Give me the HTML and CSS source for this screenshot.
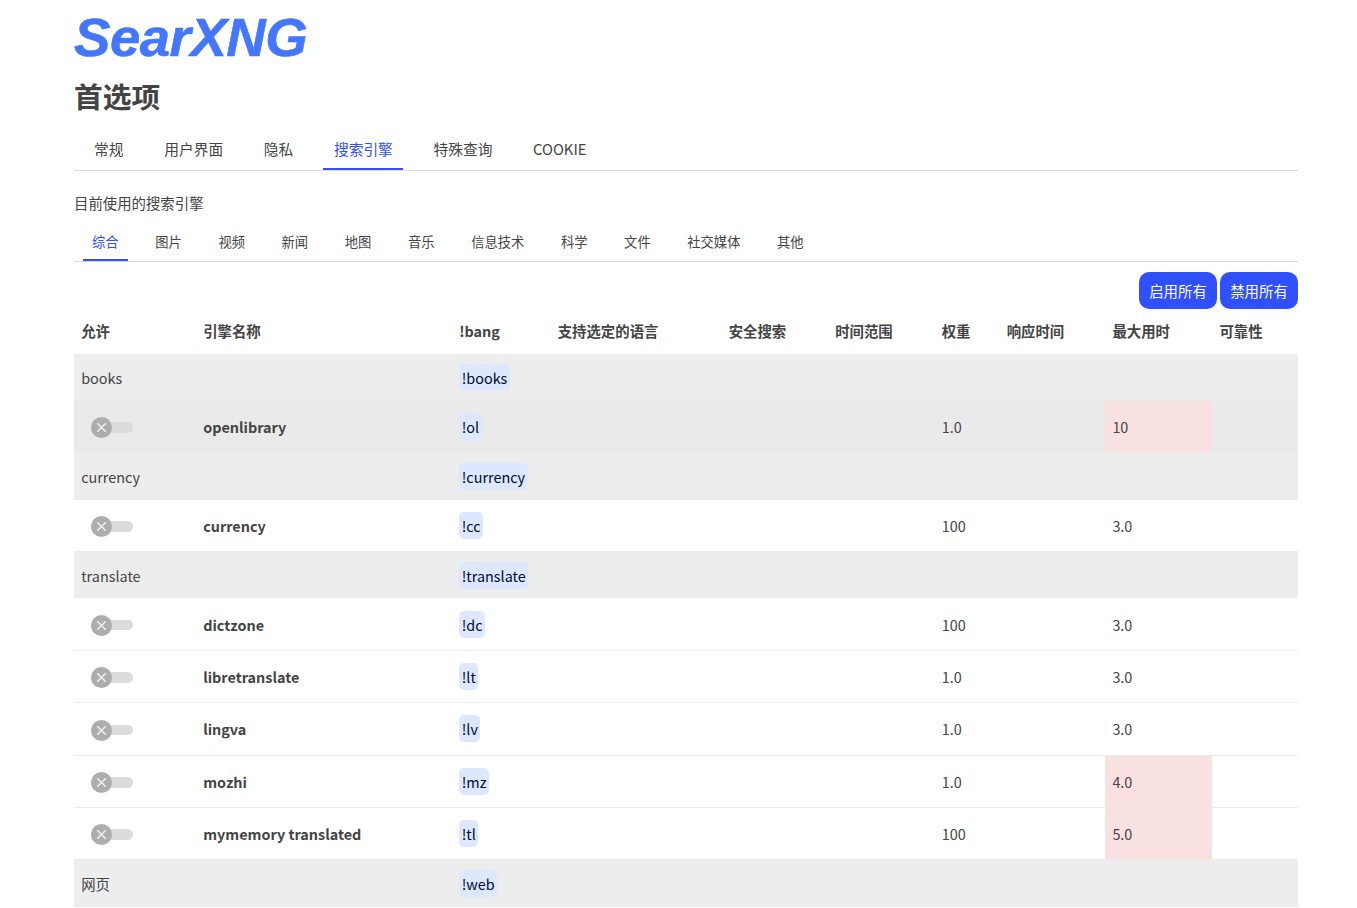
FILE: index.html
```html
<!DOCTYPE html>
<html lang="zh">
<head>
<meta charset="utf-8">
<title>SearXNG</title>
<link rel="stylesheet" href="styles.css">
</head>
<body>
<main class="page">
  <a class="logo">SearXNG</a>
  <h1 class="title">首选项</h1>
  <nav class="tabs main-tabs">
    <a>常规</a><a>用户界面</a><a>隐私</a><a class="active">搜索引擎</a><a>特殊查询</a><a>COOKIE</a>
  </nav>
  <p class="lead">目前使用的搜索引擎</p>
  <nav class="tabs sub-tabs">
    <a class="active">综合</a><a>图片</a><a>视频</a><a>新闻</a><a>地图</a><a>音乐</a><a>信息技术</a><a>科学</a><a>文件</a><a>社交媒体</a><a>其他</a>
  </nav>
  <div class="actions"><button>启用所有</button><button>禁用所有</button></div>
  <table class="engines">
    <colgroup>
      <col class="c1"><col class="c2"><col class="c3"><col class="c4"><col class="c5"><col class="c6"><col class="c7"><col class="c8"><col class="c9"><col class="c10">
    </colgroup>
    <thead>
      <tr><th>允许</th><th>引擎名称</th><th>!bang</th><th>支持选定的语言</th><th>安全搜索</th><th>时间范围</th><th>权重</th><th>响应时间</th><th>最大用时</th><th>可靠性</th></tr>
    </thead>
    <tbody>
      <tr class="group"><td colspan="2">books</td><td colspan="8"><span class="bang">!books</span></td></tr>
      <tr class="hover"><td><span class="toggle"><span class="knob"><svg viewBox="0 0 10 10"><path d="M0 0L10 10M10 0L0 10"/></svg></span></span></td><td class="name">openlibrary</td><td><span class="bang">!ol</span></td><td></td><td></td><td></td><td>1.0</td><td></td><td class="warn">10</td><td></td></tr>
      <tr class="group"><td colspan="2">currency</td><td colspan="8"><span class="bang">!currency</span></td></tr>
      <tr><td><span class="toggle"><span class="knob"><svg viewBox="0 0 10 10"><path d="M0 0L10 10M10 0L0 10"/></svg></span></span></td><td class="name">currency</td><td><span class="bang">!cc</span></td><td></td><td></td><td></td><td>100</td><td></td><td>3.0</td><td></td></tr>
      <tr class="group"><td colspan="2">translate</td><td colspan="8"><span class="bang">!translate</span></td></tr>
      <tr><td><span class="toggle"><span class="knob"><svg viewBox="0 0 10 10"><path d="M0 0L10 10M10 0L0 10"/></svg></span></span></td><td class="name">dictzone</td><td><span class="bang">!dc</span></td><td></td><td></td><td></td><td>100</td><td></td><td>3.0</td><td></td></tr>
      <tr><td><span class="toggle"><span class="knob"><svg viewBox="0 0 10 10"><path d="M0 0L10 10M10 0L0 10"/></svg></span></span></td><td class="name">libretranslate</td><td><span class="bang">!lt</span></td><td></td><td></td><td></td><td>1.0</td><td></td><td>3.0</td><td></td></tr>
      <tr><td><span class="toggle"><span class="knob"><svg viewBox="0 0 10 10"><path d="M0 0L10 10M10 0L0 10"/></svg></span></span></td><td class="name">lingva</td><td><span class="bang">!lv</span></td><td></td><td></td><td></td><td>1.0</td><td></td><td>3.0</td><td></td></tr>
      <tr><td><span class="toggle"><span class="knob"><svg viewBox="0 0 10 10"><path d="M0 0L10 10M10 0L0 10"/></svg></span></span></td><td class="name">mozhi</td><td><span class="bang">!mz</span></td><td></td><td></td><td></td><td>1.0</td><td></td><td class="warn">4.0</td><td></td></tr>
      <tr><td><span class="toggle"><span class="knob"><svg viewBox="0 0 10 10"><path d="M0 0L10 10M10 0L0 10"/></svg></span></span></td><td class="name">mymemory translated</td><td><span class="bang">!tl</span></td><td></td><td></td><td></td><td>100</td><td></td><td class="warn">5.0</td><td></td></tr>
      <tr class="group"><td colspan="2">网页</td><td colspan="8"><span class="bang">!web</span></td></tr>
    </tbody>
  </table>
</main>
</body>
</html>
```
FILE: styles.css
```css
html, body { margin: 0; padding: 0; background: #fff; }
body {
  font-family: "Noto Sans CJK SC", "Noto Sans", sans-serif;
  font-size: 14.4px;
  color: #444;
  height: 908px;
  overflow: hidden;
}
.page { width: 1224px; margin-left: 74px; }
.logo {
  display: block;
  height: 75px;
  line-height: 76px;
  font-family: "Liberation Sans", Arial, sans-serif;
  font-style: italic;
  font-weight: 700;
  font-size: 54.5px;
  letter-spacing: -0.45px;
  -webkit-text-stroke: 0.6px #4477ff;
  color: #4477ff;
}
.title { margin: 0; font-size: 28.8px; font-weight: 700; line-height: 42px; color: #444; }
.tabs { display: flex; border-bottom: 1px solid #ddd; }
.tabs a { display: block; white-space: nowrap; }
.main-tabs { margin-top: 10px; height: 43px; font-size: 14.72px; padding-left: 9.6px; }
.main-tabs a { padding: 0 10.5px; margin-right: 19.7px; line-height: 43px; height: 41px; }
.main-tabs a.active, .sub-tabs a.active { color: #3050ff; border-bottom: 2px solid #3050ff; }
.lead { margin: 0; padding-top: 22px; line-height: 20px; font-size: 14.4px; }
.sub-tabs { margin-top: 9px; height: 39px; font-size: 13.3px; padding-left: 9px; }
.sub-tabs a { padding: 0 9px; margin-right: 18.6px; line-height: 40px; height: 37px; }
.actions { display: flex; justify-content: flex-end; gap: 3px; padding-top: 10px; }
.actions button {
  font: inherit;
  font-size: 14.4px;
  line-height: 35px;
  color: #fff;
  background: #3050ff;
  border: 0;
  border-radius: 10px;
  height: 37px;
  width: 78px;
  padding: 0;
}
.engines { width: 1224px; table-layout: fixed; border-collapse: collapse; }
.c1 { width: 122px; } .c2 { width: 256px; } .c3 { width: 98.5px; } .c4 { width: 171px; } .c5 { width: 106.5px; }
.c6 { width: 106.5px; } .c7 { width: 65px; } .c8 { width: 105.7px; } .c9 { width: 107px; } .c10 { width: 85.8px; }
th { text-align: left; font-weight: 700; padding: 0 7.2px 2px; height: 45px; box-sizing: border-box; font-size: 14.4px; white-space: nowrap; }
td { padding: 0 7.2px; height: 52.4px; border-bottom: 1px solid #ececec; box-sizing: border-box; }
.group td { height: 46.4px; padding-top: 1px; background: #ededed; }
.hover td { background: #eaeaea; }
td.warn { background: #f9e1e1; }
.name { font-weight: 700; white-space: nowrap; }
.bang {
  display: inline-block;
  background: #dde8ff;
  color: #000a32;
  border-radius: 5px;
  padding: 0 2.5px;
  line-height: 27px;
  vertical-align: middle;
}
.toggle { display: block; position: relative; margin: 2px 0 0 10px; width: 42px; height: 10.5px; border-radius: 5.25px; background: #dcdcdc; }
.knob { position: absolute; left: 0; top: -5px; width: 21px; height: 21px; border-radius: 50%; background: #adadad; display: flex; align-items: center; justify-content: center; }
.knob svg { width: 9px; height: 9px; }
.knob path { stroke: #f4f4f4; stroke-width: 1.5; fill: none; }
```
